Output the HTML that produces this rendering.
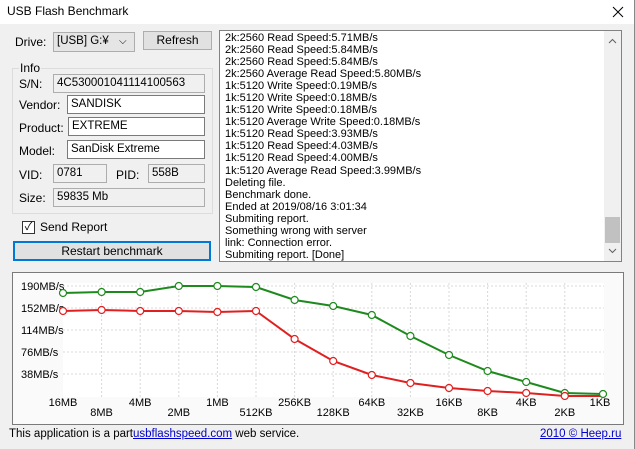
<!DOCTYPE html>
<html><head><meta charset="utf-8"><style>
*{box-sizing:border-box}
body{margin:0;width:635px;height:449px;background:#f0f0f0;font-family:"Liberation Sans","Noto Sans CJK JP",sans-serif;font-size:12px;color:#000;position:relative;overflow:hidden}
.a{position:absolute;white-space:nowrap}
.box{position:absolute;border:1px solid #7a7a7a;background:#fff;padding:1px 3px;font-size:11.5px;line-height:15px}
.g{background:#f0f0f0;border-color:#adadad}
.btn{position:absolute;background:#e1e1e1;border:1px solid #adadad;text-align:center;line-height:17px}
</style></head><body>
<div class="a" style="left:0;top:0;width:635px;height:24px;background:#fff"></div>
<div class="a" style="left:7px;top:4px;font-size:12px">USB Flash Benchmark</div>
<svg class="a" style="left:612px;top:6px" width="12" height="12"><path d="M1 1L11 11M11 1L1 11" stroke="#000" stroke-width="1"/></svg>
<div class="a" style="left:634px;top:0;width:1px;height:449px;background:#888"></div>

<div class="a" style="left:15px;top:35px">Drive:</div>
<div class="box g" style="left:53px;top:32px;width:82px;height:20px;background:#e5e5e5;border-color:#adadad">[USB] G:¥ <span style="position:absolute;left:65px;top:1px;font-size:10px">⌵</span></div>
<div class="btn" style="left:143px;top:31px;width:69px;height:19px">Refresh</div>

<div class="a" style="left:12px;top:68px;width:201px;height:146px;border:1px solid #dcdcdc"></div>
<div class="a" style="left:19px;top:61px;background:#f0f0f0;padding:0 1px">Info</div>
<div class="a" style="left:19px;top:77px">S/N:</div>
<div class="box g" style="left:53px;top:74px;width:152px;height:19px">4C530001041114100563</div>
<div class="a" style="left:19px;top:98px">Vendor:</div>
<div class="box" style="left:67px;top:95px;width:138px;height:19px">SANDISK</div>
<div class="a" style="left:19px;top:121px">Product:</div>
<div class="box" style="left:68px;top:117px;width:137px;height:19px">EXTREME</div>
<div class="a" style="left:19px;top:144px">Model:</div>
<div class="box" style="left:67px;top:140px;width:138px;height:19px">SanDisk Extreme</div>
<div class="a" style="left:19px;top:168px">VID:</div>
<div class="box g" style="left:53px;top:164px;width:54px;height:19px">0781</div>
<div class="a" style="left:116px;top:168px">PID:</div>
<div class="box g" style="left:148px;top:164px;width:57px;height:19px">558B</div>
<div class="a" style="left:19px;top:191px">Size:</div>
<div class="box g" style="left:53px;top:188px;width:152px;height:19px">59835 Mb</div>

<div class="a" style="left:22px;top:221px;width:13px;height:13px;border:1px solid #333;background:#fff;font-size:11px;line-height:11px;text-align:center">✓</div>
<div class="a" style="left:40px;top:220px">Send Report</div>
<div class="btn" style="left:13px;top:241px;width:198px;height:20px;border:2px solid #0078d7;line-height:16px">Restart benchmark</div>

<div class="a" style="left:219px;top:30px;width:403px;height:232px;border:1px solid #828282;background:#fff"></div>
<div class="a" style="left:225px;top:32px;font-size:11px;line-height:12.05px">2k:2560 Read Speed:5.71MB/s<br>2k:2560 Read Speed:5.84MB/s<br>2k:2560 Read Speed:5.84MB/s<br>2k:2560 Average Read Speed:5.80MB/s<br>1k:5120 Write Speed:0.19MB/s<br>1k:5120 Write Speed:0.18MB/s<br>1k:5120 Write Speed:0.18MB/s<br>1k:5120 Average Write Speed:0.18MB/s<br>1k:5120 Read Speed:3.93MB/s<br>1k:5120 Read Speed:4.03MB/s<br>1k:5120 Read Speed:4.00MB/s<br>1k:5120 Average Read Speed:3.99MB/s<br>Deleting file.<br>Benchmark done.<br>Ended at 2019/08/16 3:01:34<br>Submiting report.<br>Something wrong with server<br>link: Connection error.<br>Submiting report. [Done]</div>
<div class="a" style="left:604px;top:31px;width:17px;height:230px;background:#f0f0f0"></div>
<svg class="a" style="left:604px;top:31px" width="17" height="230"><path d="M5 12L8.5 8.5L12 12M5 218L8.5 221.5L12 218" fill="none" stroke="#606060"/><rect x="1" y="186" width="15" height="26" fill="#c1c1c1"/></svg>

<svg class="a" style="left:0;top:0" width="635" height="449" font-family="Liberation Sans, sans-serif" font-size="11">
<rect x="12.5" y="272.5" width="611" height="152" fill="#fafafa" stroke="#7a7a7a"/>
<rect x="63" y="283" width="541" height="114" fill="#fff"/>
<g stroke="#d8d8d8" stroke-dasharray="2,2">
<line x1="63" y1="286" x2="604" y2="286"/><line x1="63" y1="308" x2="604" y2="308"/><line x1="63" y1="330" x2="604" y2="330"/><line x1="63" y1="352" x2="604" y2="352"/><line x1="63" y1="374" x2="604" y2="374"/>
<line x1="101.6" y1="283" x2="101.6" y2="397"/><line x1="140.2" y1="283" x2="140.2" y2="397"/><line x1="178.8" y1="283" x2="178.8" y2="397"/><line x1="217.4" y1="283" x2="217.4" y2="397"/><line x1="256" y1="283" x2="256" y2="397"/><line x1="294.6" y1="283" x2="294.6" y2="397"/><line x1="333.2" y1="283" x2="333.2" y2="397"/><line x1="371.8" y1="283" x2="371.8" y2="397"/><line x1="410.4" y1="283" x2="410.4" y2="397"/><line x1="449" y1="283" x2="449" y2="397"/><line x1="487.6" y1="283" x2="487.6" y2="397"/><line x1="526.2" y1="283" x2="526.2" y2="397"/><line x1="564.8" y1="283" x2="564.8" y2="397"/>
</g>
<g>
<text x="21" y="290">190MB/s</text><text x="21" y="312">152MB/s</text><text x="21" y="334">114MB/s</text><text x="21" y="356">76MB/s</text><text x="21" y="378">38MB/s</text>
</g>
<g text-anchor="middle">
<text x="63" y="406">16MB</text><text x="101.6" y="416">8MB</text><text x="140.2" y="406">4MB</text><text x="178.8" y="416">2MB</text><text x="217.4" y="406">1MB</text><text x="256" y="416">512KB</text><text x="294.6" y="406">256KB</text><text x="333.2" y="416">128KB</text><text x="371.8" y="406">64KB</text><text x="410.4" y="416">32KB</text><text x="449" y="406">16KB</text><text x="487.6" y="416">8KB</text><text x="526.2" y="406">4KB</text><text x="564.8" y="416">2KB</text><text x="600" y="406">1KB</text>
</g>
<polyline fill="none" stroke="#1e8a1e" stroke-width="2" points="63,293 101.6,292 140.2,292 178.8,286 217.4,286 256,287 294.6,300 333.2,306 371.8,315 410.4,336 449,355 487.6,371 526.2,382 564.8,393 603,394"/>
<polyline fill="none" stroke="#e02020" stroke-width="2" points="63,311 101.6,310 140.2,311 178.8,311 217.4,312 256,311 294.6,339 333.2,361 371.8,375 410.4,383 449,388 487.6,391 526.2,393 564.8,396 603,396"/>
<g fill="#fff" stroke="#1e8a1e" stroke-width="1.2">
<circle cx="63" cy="293" r="3.5"/><circle cx="101.6" cy="292" r="3.5"/><circle cx="140.2" cy="292" r="3.5"/><circle cx="178.8" cy="286" r="3.5"/><circle cx="217.4" cy="286" r="3.5"/><circle cx="256" cy="287" r="3.5"/><circle cx="294.6" cy="300" r="3.5"/><circle cx="333.2" cy="306" r="3.5"/><circle cx="371.8" cy="315" r="3.5"/><circle cx="410.4" cy="336" r="3.5"/><circle cx="449" cy="355" r="3.5"/><circle cx="487.6" cy="371" r="3.5"/><circle cx="526.2" cy="382" r="3.5"/><circle cx="564.8" cy="393" r="3.5"/><circle cx="603" cy="394" r="3.5"/>
</g>
<g fill="#fff" stroke="#e02020" stroke-width="1.2">
<circle cx="63" cy="311" r="3.5"/><circle cx="101.6" cy="310" r="3.5"/><circle cx="140.2" cy="311" r="3.5"/><circle cx="178.8" cy="311" r="3.5"/><circle cx="217.4" cy="312" r="3.5"/><circle cx="256" cy="311" r="3.5"/><circle cx="294.6" cy="339" r="3.5"/><circle cx="333.2" cy="361" r="3.5"/><circle cx="371.8" cy="375" r="3.5"/><circle cx="410.4" cy="383" r="3.5"/><circle cx="449" cy="388" r="3.5"/><circle cx="487.6" cy="391" r="3.5"/><circle cx="526.2" cy="393" r="3.5"/><circle cx="564.8" cy="396" r="3.5"/>
</g>
</svg>

<div class="a" style="left:9px;top:428px;font-size:11.5px">This application is a part<span style="color:#0000cc;text-decoration:underline">usbflashspeed.com</span> web service.</div>
<div class="a" style="left:540px;top:428px;font-size:11.5px;color:#0000cc;text-decoration:underline">2010 © Heep.ru</div>
</body></html>
